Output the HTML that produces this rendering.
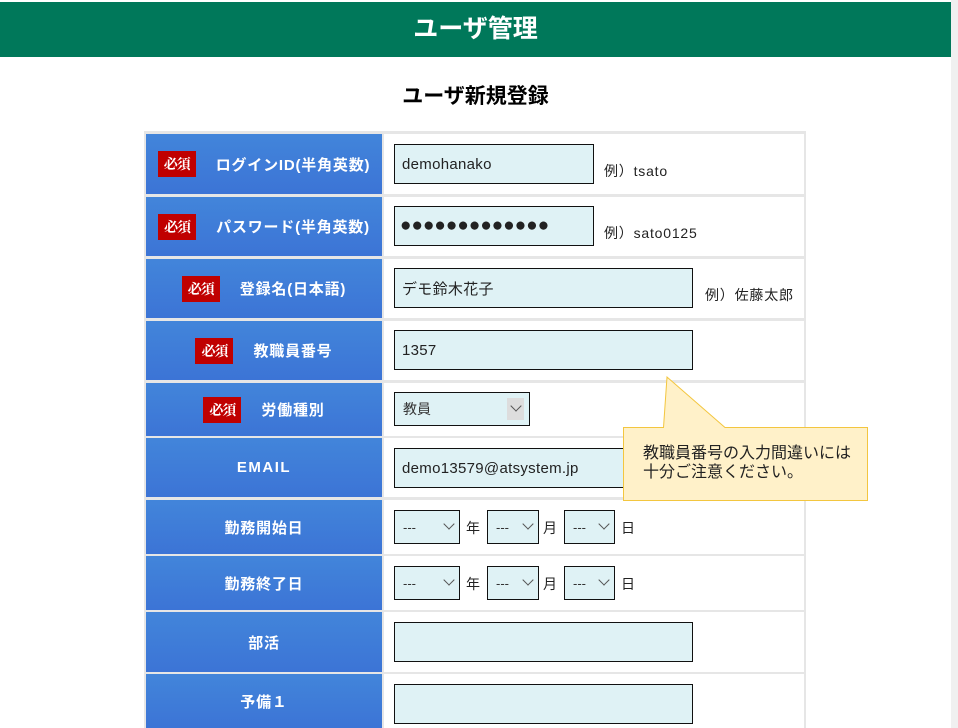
<!DOCTYPE html>
<html><head><meta charset="utf-8"><style>
*{margin:0;padding:0;box-sizing:border-box}
html,body{width:958px;height:728px;overflow:hidden}
body{background:#fff;position:relative;font-family:"Liberation Sans","Noto Sans CJK JP",sans-serif;color:#000}
.sb{position:absolute;left:951px;top:0;width:7px;height:728px;background:#f0f0f0}
.hd{position:absolute;left:0;top:2px;width:951px;height:55px;background:#00785a;color:#fff;font-size:25px;font-weight:bold;text-align:center;line-height:54px}
.tt{position:absolute;left:0;width:951px;top:83px;text-align:center;font-size:21px;font-weight:bold;line-height:28px}
.tbl{position:absolute;left:144px;top:131px;width:662px;height:597px;background:#e6e6e6}
.lab{position:absolute;left:146px;width:236px;background:linear-gradient(#4285da,#3c74d6);color:#fff;font-weight:bold;font-size:15px;letter-spacing:0.8px;display:flex;align-items:center;justify-content:center;overflow:hidden}
.val{position:absolute;left:384px;width:420px;background:#fff;overflow:hidden}
.bd{background:#c00000;color:#fff;font-family:"Noto Serif CJK SC",serif;font-weight:bold;font-size:14px;width:38px;height:26px;line-height:26px;text-align:center;margin-right:20px;letter-spacing:-1px}
.in{position:absolute;background:#dff2f5;border:1.5px solid #111;font-size:15px;letter-spacing:0.3px;padding-left:7px;display:flex;align-items:center;color:#222}
.ex{position:absolute;font-size:14px;letter-spacing:0.8px;color:#222}
.sel{position:absolute;background:#dff2f5;border:1.5px solid #111;font-size:13px;color:#333;padding-left:8px;display:flex;align-items:center}
.ch{position:absolute;right:6px;top:50%;width:8px;height:8px;border-right:1.3px solid #555;border-bottom:1.3px solid #555;transform:rotate(45deg);margin-top:-7px}
.u{position:absolute;font-size:14px;color:#222}
</style></head><body>
<div class="sb"></div>
<div class="hd">ユーザ管理</div>
<div class="tt">ユーザ新規登録</div>
<div class="tbl"></div>

<div class="lab" style="top:134px;height:60px"><span class="bd">必須</span>ログインID(半角英数)</div>
<div class="val" style="top:134px;height:60px"></div>
<div class="lab" style="top:197px;height:59px"><span class="bd">必須</span>パスワード(半角英数)</div>
<div class="val" style="top:197px;height:59px"></div>
<div class="lab" style="top:259px;height:59px"><span class="bd">必須</span>登録名(日本語)</div>
<div class="val" style="top:259px;height:59px"></div>
<div class="lab" style="top:321px;height:59px"><span class="bd">必須</span>教職員番号</div>
<div class="val" style="top:321px;height:59px"></div>
<div class="lab" style="top:383px;height:53px"><span class="bd">必須</span>労働種別</div>
<div class="val" style="top:383px;height:53px"></div>
<div class="lab" style="top:438px;height:59px;letter-spacing:1.5px">EMAIL</div>
<div class="val" style="top:438px;height:59px"></div>
<div class="lab" style="top:500px;height:54px">勤務開始日</div>
<div class="val" style="top:500px;height:54px"></div>
<div class="lab" style="top:556px;height:54px">勤務終了日</div>
<div class="val" style="top:556px;height:54px"></div>
<div class="lab" style="top:612px;height:60px">部活</div>
<div class="val" style="top:612px;height:60px"></div>
<div class="lab" style="top:674px;height:54px">予備１</div>
<div class="val" style="top:674px;height:54px"></div>

<div class="in" style="left:394px;top:144px;width:200px;height:40px">demohanako</div>
<div class="ex" style="left:604px;top:161px">例）tsato</div>
<div class="in" style="left:394px;top:206px;width:200px;height:40px;font-size:19px;letter-spacing:0;padding-left:5px">●●●●●●●●●●●●●</div>
<div class="ex" style="left:604px;top:223px">例）sato0125</div>
<div class="in" style="left:394px;top:268px;width:299px;height:40px">デモ鈴木花子</div>
<div class="ex" style="left:705px;top:285px">例）佐藤太郎</div>
<div class="in" style="left:394px;top:330px;width:299px;height:40px">1357</div>
<div class="sel" style="left:394px;top:392px;width:136px;height:34px;font-size:14px">教員<span style="position:absolute;right:5px;top:5px;width:17px;height:22px;background:#ddd"></span><span class="ch" style="right:9px"></span></div>
<div class="in" style="left:394px;top:448px;width:299px;height:40px">demo13579@atsystem.jp</div>

<div class="sel" style="left:394px;top:510px;width:66px;height:34px">---<span class="ch"></span></div>
<div class="u" style="left:466px;top:518px">年</div>
<div class="sel" style="left:487px;top:510px;width:52px;height:34px">---<span class="ch"></span></div>
<div class="u" style="left:543px;top:518px">月</div>
<div class="sel" style="left:564px;top:510px;width:51px;height:34px">---<span class="ch"></span></div>
<div class="u" style="left:621px;top:518px">日</div>

<div class="sel" style="left:394px;top:566px;width:66px;height:34px">---<span class="ch"></span></div>
<div class="u" style="left:466px;top:574px">年</div>
<div class="sel" style="left:487px;top:566px;width:52px;height:34px">---<span class="ch"></span></div>
<div class="u" style="left:543px;top:574px">月</div>
<div class="sel" style="left:564px;top:566px;width:51px;height:34px">---<span class="ch"></span></div>
<div class="u" style="left:621px;top:574px">日</div>

<div class="in" style="left:394px;top:622px;width:299px;height:40px"></div>
<div class="in" style="left:394px;top:684px;width:299px;height:40px"></div>

<svg style="position:absolute;left:0;top:0" width="958" height="728">
<path d="M623.5 427.5 H663.5 L667 377 L725 427.5 H867.5 V500.5 H623.5 Z" fill="#fff1c9" stroke="#f3c63f" stroke-width="1"/>
</svg>
<div style="position:absolute;left:643px;top:444px;font-size:16px;line-height:19px;color:#222">教職員番号の入力間違いには<br>十分ご注意ください。</div>
</body></html>
